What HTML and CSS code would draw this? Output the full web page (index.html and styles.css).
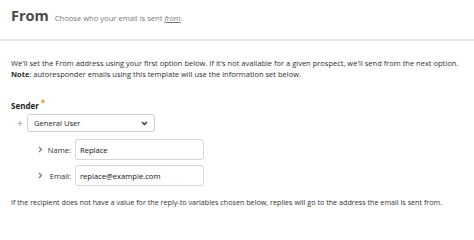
FILE: index.html
```html
<!DOCTYPE html>
<html lang="en">
<head>
<meta charset="utf-8">
<link rel="stylesheet" href="styles.css">
</head>
<body>
<header class="head">
  <h1 class="title">From</h1>
  <span class="subtitle">Choose who your email is sent <em class="u">from</em>.</span>
</header>
<main class="content">
  <p class="intro">We'll set the From address using your first option below. If it's not available for a given prospect, we'll send from the next option.<br><b>Note</b>: autoresponder emails using this template will use the information set below.</p>
  <div class="label">Sender<span class="req">*</span></div>
  <div class="sel-row">
    <span class="plus">+</span>
    <div class="select"><span>General User</span>
      <svg class="caret" width="7" height="5" viewBox="0 0 7 5"><path d="M1 1 L3.5 3.5 L6 1" fill="none" stroke="#333" stroke-width="1.3"/></svg>
    </div>
  </div>
  <div class="field">
    <svg class="chev" width="5" height="7" viewBox="0 0 5 7"><path d="M1 1 L3.5 3.5 L1 6" fill="none" stroke="#777" stroke-width="1.1"/></svg>
    <span class="flabel">Name:</span>
    <div class="input">Replace</div>
  </div>
  <div class="field">
    <svg class="chev" width="5" height="7" viewBox="0 0 5 7"><path d="M1 1 L3.5 3.5 L1 6" fill="none" stroke="#777" stroke-width="1.1"/></svg>
    <span class="flabel">Email:</span>
    <div class="input">replace@example.com</div>
  </div>
  <p class="foot">If the recipient does not have a value for the reply-to variables chosen below, replies will go to the address the email is sent from.</p>
</main>
</body>
</html>
```
FILE: styles.css
```css
html, body { margin: 0; padding: 0; background: #fff; }
body { font-family: "Open Sans", "Noto Sans", sans-serif; color: #333; font-size: 8px; width: 474px; height: 220px; overflow: hidden; }
.head { display: flex; align-items: baseline; gap: 6px; padding: 6px 11px 0; height: 41px; box-sizing: border-box; border-bottom: 2px solid #e8e8e8; }
.title { margin: 0; font-size: 14.5px; font-weight: 700; color: #4a4a4a; line-height: 20px; }
.subtitle { font-size: 7.6px; color: #777; }
.u { text-decoration: underline; }
.content { padding: 0 11px; }
.intro { margin: 17px 0 0; line-height: 11px; font-size: 7.5px; color: #2f2f2f; }
.intro b { font-weight: 700; }
.label { margin-top: 17px; font-weight: 700; font-size: 8px; color: #222; line-height: 12px; }
.req { color: #e8962e; font-size: 8px; margin-left: 2px; vertical-align: 3px; }
.sel-row { display: flex; align-items: center; margin-top: 2px; padding-left: 6px; gap: 4px; }
.plus { color: #888; font-size: 10px; width: 6px; line-height: 10px; }
.select { width: 128px; height: 18px; box-sizing: border-box; border: 1px solid #cfcfcf; border-radius: 3px; display: flex; align-items: center; justify-content: space-between; padding: 0 6px 0 6px; font-size: 7.6px; color: #222; }
.field { display: flex; align-items: center; margin-top: 5px; padding-left: 27px; }
.sel-row + .field { margin-top: 7px; }
.chev { margin-right: 4px; }
.flabel { width: 24px; text-align: right; font-size: 7.6px; color: #333; margin-right: 4px; }
.input { width: 129px; height: 21px; box-sizing: border-box; border: 1px solid #d6d6d6; border-radius: 3px; display: flex; align-items: center; padding: 0 4px; font-size: 7.6px; color: #111; }
.foot { margin: 11px 0 0; font-size: 7.2px; color: #333; line-height: 11px; }
```
